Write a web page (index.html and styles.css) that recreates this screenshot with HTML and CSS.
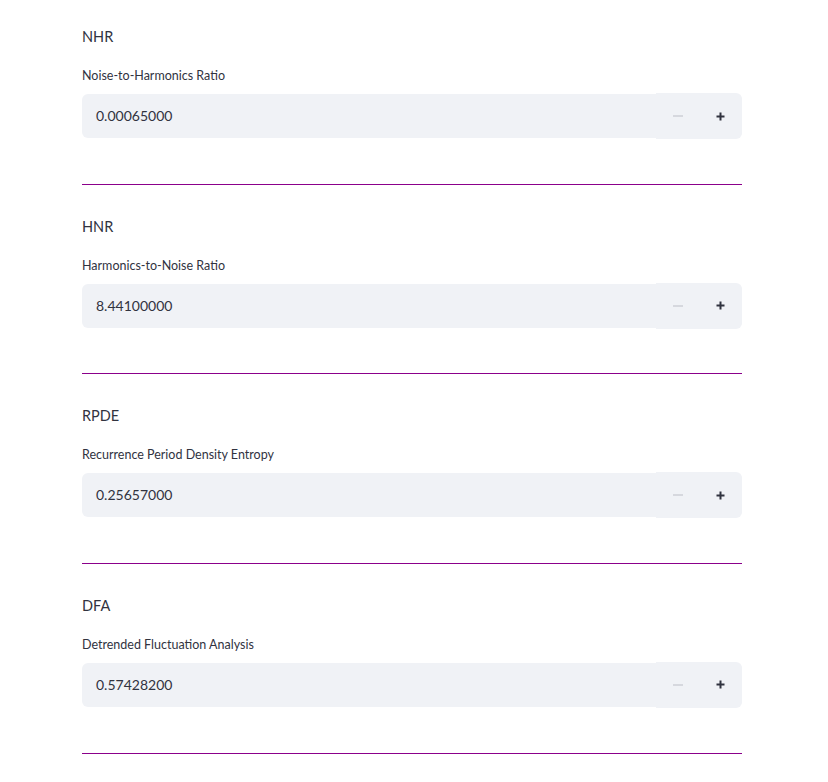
FILE: index.html
```html
<!DOCTYPE html>
<html lang="en">
<head>
<meta charset="utf-8">
<title>Voice features</title>
<link rel="stylesheet" href="styles.css">
</head>
<body>
<main class="page">
  <section class="feature">
    <h3 class="feature-title">NHR</h3>
    <label class="field-label">Noise-to-Harmonics Ratio</label>
    <div class="number-input">
      <div class="value">0.00065000</div>
      <div class="steppers">
        <button class="step step-minus" aria-label="decrement"><span class="minus-bar"></span></button>
        <button class="step step-plus" aria-label="increment"><svg width="9" height="9" viewBox="0 0 9 9"><path d="M4.5 0.5v8M0.5 4.5h8" stroke="#31333f" stroke-width="2"/></svg></button>
      </div>
    </div>
    <hr class="divider">
  </section>
  <section class="feature">
    <h3 class="feature-title">HNR</h3>
    <label class="field-label">Harmonics-to-Noise Ratio</label>
    <div class="number-input">
      <div class="value">8.44100000</div>
      <div class="steppers">
        <button class="step step-minus" aria-label="decrement"><span class="minus-bar"></span></button>
        <button class="step step-plus" aria-label="increment"><svg width="9" height="9" viewBox="0 0 9 9"><path d="M4.5 0.5v8M0.5 4.5h8" stroke="#31333f" stroke-width="2"/></svg></button>
      </div>
    </div>
    <hr class="divider">
  </section>
  <section class="feature">
    <h3 class="feature-title">RPDE</h3>
    <label class="field-label">Recurrence Period Density Entropy</label>
    <div class="number-input">
      <div class="value">0.25657000</div>
      <div class="steppers">
        <button class="step step-minus" aria-label="decrement"><span class="minus-bar"></span></button>
        <button class="step step-plus" aria-label="increment"><svg width="9" height="9" viewBox="0 0 9 9"><path d="M4.5 0.5v8M0.5 4.5h8" stroke="#31333f" stroke-width="2"/></svg></button>
      </div>
    </div>
    <hr class="divider">
  </section>
  <section class="feature">
    <h3 class="feature-title">DFA</h3>
    <label class="field-label">Detrended Fluctuation Analysis</label>
    <div class="number-input">
      <div class="value">0.57428200</div>
      <div class="steppers">
        <button class="step step-minus" aria-label="decrement"><span class="minus-bar"></span></button>
        <button class="step step-plus" aria-label="increment"><svg width="9" height="9" viewBox="0 0 9 9"><path d="M4.5 0.5v8M0.5 4.5h8" stroke="#31333f" stroke-width="2"/></svg></button>
      </div>
    </div>
    <hr class="divider">
  </section>
</main>
</body>
</html>
```
FILE: styles.css
```css
html, body {
  margin: 0;
  padding: 0;
  background: #ffffff;
}
body {
  font-family: "Lato", "Noto Sans", sans-serif;
  color: #31333f;
}
.page {
  width: 660px;
  margin-left: 82px;
  padding-top: 25px;
  display: flex;
  flex-direction: column;
}
.feature {
  display: flex;
  flex-direction: column;
}
.feature + .feature .feature-title {
  margin-top: 30px;
}
.feature-title {
  margin: 0;
  height: 24px;
  line-height: 24px;
  font-size: 14.5px;
  font-weight: 400;
}
.field-label {
  margin-top: 17px;
  height: 20px;
  line-height: 20px;
  font-size: 12.5px;
}
.number-input {
  margin-top: 8px;
  height: 44px;
  display: flex;
  align-items: center;
  background: #f0f2f6;
  border-radius: 6px;
}
.value {
  flex: 1;
  padding-left: 14px;
  font-size: 14px;
  line-height: 20px;
}
.steppers {
  display: flex;
  height: 46px;
  align-self: center;
}
.step {
  width: 43px;
  height: 46px;
  border: 0;
  padding: 0;
  background: #f0f2f6;
  display: flex;
  align-items: center;
  justify-content: center;
}
.step-plus {
  border-radius: 0 6px 6px 0;
}
.minus-bar {
  display: block;
  width: 10px;
  height: 2px;
  background: #d6d8de;
}
.divider {
  margin: 45.67px 0 0 0;
  border: 0;
  height: 1px;
  background: #8b008b;
}
```
